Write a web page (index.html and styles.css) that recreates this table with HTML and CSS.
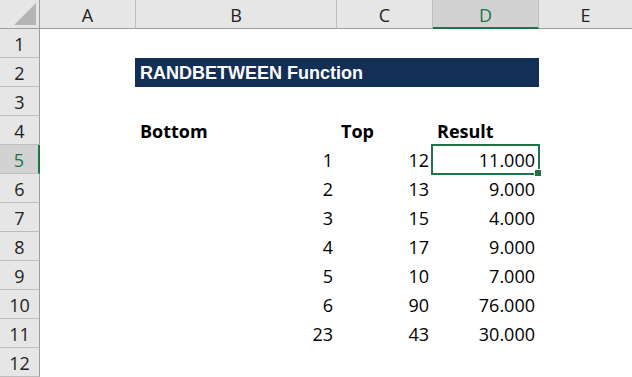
FILE: index.html
```html
<!DOCTYPE html>
<html>
<head>
<meta charset="utf-8">
<link rel="stylesheet" href="styles.css">
</head>
<body>
<div class="sheet">
  <div class="corner"><svg width="22" height="22" viewBox="0 0 22 22"><polygon points="22,0 22,22 0,22" fill="#b4b4b4"/></svg></div>
  <div class="colhdr">A</div>
  <div class="colhdr">B</div>
  <div class="colhdr">C</div>
  <div class="colhdr sel">D</div>
  <div class="colhdr last">E</div>

  <div class="rowhdr">1</div><div class="cell"></div><div class="cell"></div><div class="cell"></div><div class="cell"></div><div class="cell"></div>

  <div class="rowhdr">2</div><div class="cell"></div><div class="title">RANDBETWEEN Function</div><div class="cell"></div>

  <div class="rowhdr">3</div><div class="cell"></div><div class="cell"></div><div class="cell"></div><div class="cell"></div><div class="cell"></div>

  <div class="rowhdr">4</div><div class="cell"></div><div class="cell bold">Bottom</div><div class="cell bold">Top</div><div class="cell bold">Result</div><div class="cell"></div>

  <div class="rowhdr sel">5</div><div class="cell"></div><div class="cell num">1</div><div class="cell num">12</div><div class="cell num active">11.000</div><div class="cell"></div>

  <div class="rowhdr">6</div><div class="cell"></div><div class="cell num">2</div><div class="cell num">13</div><div class="cell num">9.000</div><div class="cell"></div>

  <div class="rowhdr">7</div><div class="cell"></div><div class="cell num">3</div><div class="cell num">15</div><div class="cell num">4.000</div><div class="cell"></div>

  <div class="rowhdr">8</div><div class="cell"></div><div class="cell num">4</div><div class="cell num">17</div><div class="cell num">9.000</div><div class="cell"></div>

  <div class="rowhdr">9</div><div class="cell"></div><div class="cell num">5</div><div class="cell num">10</div><div class="cell num">7.000</div><div class="cell"></div>

  <div class="rowhdr">10</div><div class="cell"></div><div class="cell num">6</div><div class="cell num">90</div><div class="cell num">76.000</div><div class="cell"></div>

  <div class="rowhdr">11</div><div class="cell"></div><div class="cell num">23</div><div class="cell num">43</div><div class="cell num">30.000</div><div class="cell"></div>

  <div class="rowhdr">12</div><div class="cell"></div><div class="cell"></div><div class="cell"></div><div class="cell"></div><div class="cell"></div>
</div>
</body>
</html>
```

FILE: styles.css
```css
* { box-sizing: border-box; }
html, body { margin: 0; padding: 0; background: #ffffff; overflow: hidden; }
.sheet {
  display: grid;
  grid-template-columns: 40px 96px 201px 96px 106px 93px;
  grid-template-rows: 29px repeat(12, 29px);
  width: 632px;
  font-family: "Open Sans", "Liberation Sans", sans-serif;
  color: #000;
}
.corner {
  background: #e6e6e6;
  border-right: 1px solid #9e9e9e;
  border-bottom: 1px solid #9e9e9e;
  display: flex;
  justify-content: flex-end;
  align-items: flex-end;
  padding: 0 3px 3px 0;
}
.colhdr {
  background: #e6e6e6;
  border-right: 1px solid #bdbdbd;
  border-bottom: 1px solid #9e9e9e;
  display: flex;
  justify-content: center;
  align-items: flex-end;
  padding-bottom: 3px;
  font-size: 18px;
  line-height: 20px;
  color: #222;
}
.colhdr.last { border-right: none; }
.colhdr.sel {
  background: #d2d2d2;
  color: #217346;
  border-bottom: 2px solid #217346;
  padding-bottom: 2px;
}
.rowhdr {
  background: #e6e6e6;
  border-right: 1px solid #9e9e9e;
  border-bottom: 1px solid #bdbdbd;
  display: flex;
  justify-content: center;
  align-items: flex-end;
  padding-bottom: 3px;
  font-size: 18px;
  line-height: 20px;
  color: #222;
}
.rowhdr.sel {
  background: #d2d2d2;
  color: #217346;
  border-right: 2px solid #217346;
}
.cell {
  display: flex;
  align-items: flex-end;
  padding: 0 4px 4px 4px;
  font-size: 18px;
  line-height: 20px;
}
.cell.bold { font-weight: 700; }
.cell.num { justify-content: flex-end; }
.cell.active { position: relative; }
.cell.active::before {
  content: "";
  position: absolute;
  left: -2px;
  top: -1px;
  right: -1px;
  bottom: -1px;
  border: 2px solid #217346;
}
.cell.active::after {
  content: "";
  position: absolute;
  right: -3px;
  bottom: -3px;
  width: 6px;
  height: 6px;
  background: #217346;
  border: 1px solid #fff;
}
.title {
  grid-column: span 3;
  margin-left: -1px;
  background: #142f56;
  color: #fff;
  font-family: "Liberation Sans", Arial, sans-serif;
  font-weight: 700;
  font-size: 18px;
  line-height: 20px;
  display: flex;
  align-items: flex-end;
  padding: 0 5px 4px 5px;
}
```
